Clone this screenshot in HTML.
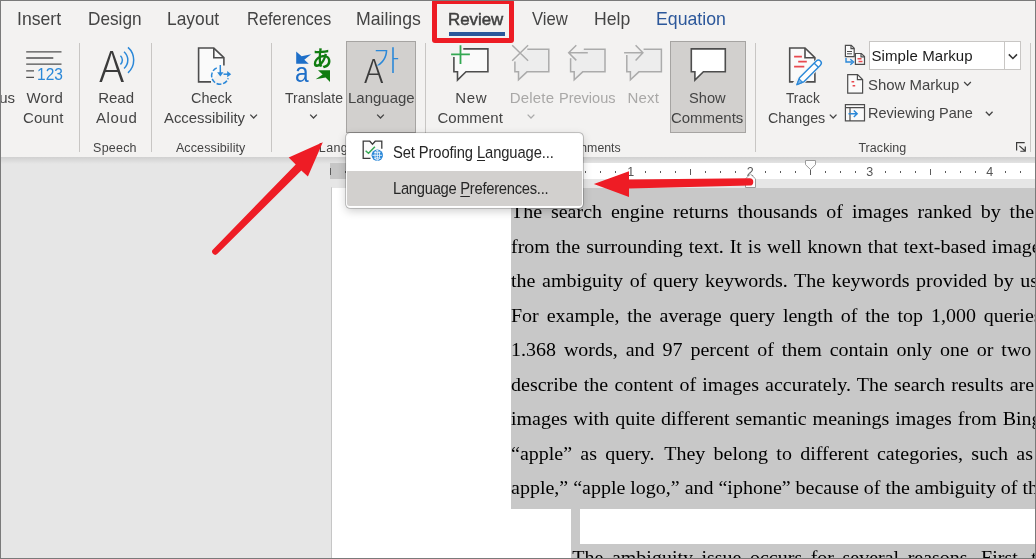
<!DOCTYPE html>
<html lang="en"><head><meta charset="utf-8"><title>Word - Review - Language Preferences</title>
<style>
html,body{margin:0;padding:0}
body{width:1036px;height:559px;position:relative;overflow:hidden;background:#f3f2f1;font-family:"Liberation Sans",sans-serif}
.t{position:absolute;white-space:nowrap;display:block}
.a{position:absolute}
.sep{position:absolute;width:1px;background:#c8c6c4;top:43px;height:109px}
.btn{position:absolute;background:#d2d0ce;border:1px solid #a6a4a2;box-sizing:border-box}
svg{position:absolute;overflow:visible}
u{text-underline-offset:2px;text-decoration-thickness:1px}
.ln{position:absolute;white-space:nowrap;font:400 20px/1 "Liberation Serif",serif;color:#000;transform:scaleY(.955);transform-origin:0 16.750px}
</style></head>
<body>
<div id="w" style="position:absolute;left:0;top:0;width:1036px;height:559px;overflow:hidden;will-change:transform">
<!-- ribbon background -->
<div class="a" style="left:0;top:0;width:1036px;height:157px;background:#f3f2f1"></div>
<!-- pressed buttons -->
<div class="btn" style="left:346px;top:41px;width:70px;height:92px"></div>
<div class="btn" style="left:670px;top:41px;width:76px;height:92px"></div>
<!-- group separators -->
<div class="sep" style="left:79px"></div>
<div class="sep" style="left:151px"></div>
<div class="sep" style="left:271px"></div>
<div class="sep" style="left:425px"></div>
<div class="sep" style="left:755px"></div>
<div class="sep" style="left:1030px"></div>
<!-- Review tab underline + red highlight box -->
<div class="a" style="left:449px;top:32px;width:56px;height:4px;background:#2b579a"></div>
<div class="a" style="left:431.700px;top:-1px;width:81.900px;height:43.500px;border:5px solid #ed1c24;border-radius:3px;box-sizing:border-box"></div>
<!-- markup combobox -->
<div class="a" style="left:869px;top:41px;width:152px;height:29px;background:#fff;border:1px solid #c8c6c4;box-sizing:border-box"></div>
<div class="a" style="left:1004px;top:42px;width:1px;height:27px;background:#c8c6c4"></div>

<!-- ribbon labels -->
<span class="t" id="l0" style="left:17.19px;top:10.93px;font:400 17.8px/1 'Liberation Sans', sans-serif;color:#444444;letter-spacing:0.000px;transform:scaleX(0.9904);transform-origin:0 0;">Insert</span>
<span class="t" id="l1" style="left:87.54px;top:10.93px;font:400 17.8px/1 'Liberation Sans', sans-serif;color:#444444;letter-spacing:0.000px;transform:scaleX(0.9682);transform-origin:0 0;">Design</span>
<span class="t" id="l2" style="left:166.51px;top:10.93px;font:400 17.8px/1 'Liberation Sans', sans-serif;color:#444444;letter-spacing:0.000px;transform:scaleX(0.9773);transform-origin:0 0;">Layout</span>
<span class="t" id="l3" style="left:246.65px;top:10.93px;font:400 17.8px/1 'Liberation Sans', sans-serif;color:#444444;letter-spacing:0.000px;transform:scaleX(0.9255);transform-origin:0 0;">References</span>
<span class="t" id="l4" style="left:356.49px;top:10.93px;font:400 17.8px/1 'Liberation Sans', sans-serif;color:#444444;letter-spacing:0.000px;transform:scaleX(0.9946);transform-origin:0 0;">Mailings</span>
<span class="t" id="l5" style="left:448.03px;top:11.44px;font:400 17.2px/1 'Liberation Sans', sans-serif;color:#404040;letter-spacing:0.000px;transform:scaleX(0.9800);transform-origin:0 0;-webkit-text-stroke:.5px #404040;">Review</span>
<span class="t" id="l6" style="left:531.75px;top:10.93px;font:400 17.8px/1 'Liberation Sans', sans-serif;color:#444444;letter-spacing:0.000px;transform:scaleX(0.9358);transform-origin:0 0;">View</span>
<span class="t" id="l7" style="left:593.91px;top:10.93px;font:400 17.8px/1 'Liberation Sans', sans-serif;color:#444444;letter-spacing:0.000px;transform:scaleX(0.9914);transform-origin:0 0;">Help</span>
<span class="t" id="l8" style="left:656.41px;top:10.93px;font:400 17.8px/1 'Liberation Sans', sans-serif;color:#2b579a;letter-spacing:0.000px;transform:scaleX(0.9956);transform-origin:0 0;">Equation</span>
<span class="t" id="l9" style="left:-0.70px;top:90.10px;font:400 15px/1 'Liberation Sans', sans-serif;color:#444444;letter-spacing:-0.244px;">us</span>
<span class="t" id="l10" style="left:26.42px;top:90.10px;font:400 15px/1 'Liberation Sans', sans-serif;color:#444444;letter-spacing:0.281px;">Word</span>
<span class="t" id="l11" style="left:23.00px;top:110.10px;font:400 15px/1 'Liberation Sans', sans-serif;color:#444444;letter-spacing:0.073px;">Count</span>
<span class="t" id="l12" style="left:98.14px;top:90.10px;font:400 15px/1 'Liberation Sans', sans-serif;color:#444444;letter-spacing:0.019px;">Read</span>
<span class="t" id="l13" style="left:96.01px;top:110.10px;font:400 15px/1 'Liberation Sans', sans-serif;color:#444444;letter-spacing:0.594px;">Aloud</span>
<span class="t" id="l14" style="left:191.03px;top:90.10px;font:400 15px/1 'Liberation Sans', sans-serif;color:#444444;letter-spacing:0.000px;transform:scaleX(0.9633);transform-origin:0 0;">Check</span>
<span class="t" id="l15" style="left:164.09px;top:110.10px;font:400 15px/1 'Liberation Sans', sans-serif;color:#444444;letter-spacing:0.000px;transform:scaleX(0.9919);transform-origin:0 0;">Accessibility</span>
<span class="t" id="l16" style="left:285.00px;top:90.10px;font:400 15px/1 'Liberation Sans', sans-serif;color:#444444;letter-spacing:0.000px;transform:scaleX(0.9365);transform-origin:0 0;">Translate</span>
<span class="t" id="l17" style="left:347.53px;top:90.10px;font:400 15px/1 'Liberation Sans', sans-serif;color:#444444;letter-spacing:0.000px;transform:scaleX(0.9981);transform-origin:0 0;">Language</span>
<span class="t" id="l18" style="left:455.34px;top:90.10px;font:400 15px/1 'Liberation Sans', sans-serif;color:#444444;letter-spacing:0.568px;">New</span>
<span class="t" id="l19" style="left:437.38px;top:110.10px;font:400 15px/1 'Liberation Sans', sans-serif;color:#444444;letter-spacing:0.083px;">Comment</span>
<span class="t" id="l20" style="left:509.75px;top:90.10px;font:400 15px/1 'Liberation Sans', sans-serif;color:#a9a8a7;letter-spacing:0.172px;">Delete</span>
<span class="t" id="l21" style="left:559.14px;top:90.10px;font:400 15px/1 'Liberation Sans', sans-serif;color:#a9a8a7;letter-spacing:0.000px;transform:scaleX(0.9685);transform-origin:0 0;">Previous</span>
<span class="t" id="l22" style="left:627.56px;top:90.10px;font:400 15px/1 'Liberation Sans', sans-serif;color:#a9a8a7;letter-spacing:0.170px;">Next</span>
<span class="t" id="l23" style="left:689.22px;top:90.10px;font:400 15px/1 'Liberation Sans', sans-serif;color:#444444;letter-spacing:0.000px;transform:scaleX(0.9756);transform-origin:0 0;">Show</span>
<span class="t" id="l24" style="left:671.20px;top:110.10px;font:400 15px/1 'Liberation Sans', sans-serif;color:#444444;letter-spacing:0.000px;transform:scaleX(0.9967);transform-origin:0 0;">Comments</span>
<span class="t" id="l25" style="left:786.20px;top:90.10px;font:400 15px/1 'Liberation Sans', sans-serif;color:#444444;letter-spacing:0.000px;transform:scaleX(0.9142);transform-origin:0 0;">Track</span>
<span class="t" id="l26" style="left:767.62px;top:110.10px;font:400 15px/1 'Liberation Sans', sans-serif;color:#444444;letter-spacing:0.000px;transform:scaleX(0.9536);transform-origin:0 0;">Changes</span>
<span class="t" id="l27" style="left:871.47px;top:47.90px;font:400 15px/1 'Liberation Sans', sans-serif;color:#1a1a1a;letter-spacing:0.092px;">Simple Markup</span>
<span class="t" id="l28" style="left:868.02px;top:77.40px;font:400 15px/1 'Liberation Sans', sans-serif;color:#444444;letter-spacing:0.000px;transform:scaleX(0.9962);transform-origin:0 0;">Show Markup</span>
<span class="t" id="l29" style="left:867.94px;top:104.60px;font:400 15px/1 'Liberation Sans', sans-serif;color:#444444;letter-spacing:0.000px;transform:scaleX(0.9682);transform-origin:0 0;">Reviewing Pane</span>
<span class="t" id="l30" style="left:93.08px;top:141.62px;font:400 12.5px/1 'Liberation Sans', sans-serif;color:#444444;letter-spacing:0.217px;">Speech</span>
<span class="t" id="l31" style="left:175.93px;top:141.62px;font:400 12.5px/1 'Liberation Sans', sans-serif;color:#444444;letter-spacing:0.114px;">Accessibility</span>
<span class="t" id="l32" style="left:318.84px;top:141.62px;font:400 12.5px/1 'Liberation Sans', sans-serif;color:#444444;letter-spacing:0.362px;">Language</span>
<span class="t" id="l33" style="left:560.84px;top:141.62px;font:400 12.5px/1 'Liberation Sans', sans-serif;color:#444444;letter-spacing:0.000px;transform:scaleX(0.9885);transform-origin:0 0;">Comments</span>
<span class="t" id="l34" style="left:858.39px;top:141.62px;font:400 12.5px/1 'Liberation Sans', sans-serif;color:#444444;letter-spacing:0.067px;">Tracking</span>
<span class="t" id="l35" style="left:36.98px;top:66.33px;font:400 16.5px/1 'Liberation Sans', sans-serif;color:#2b88d8;letter-spacing:0.000px;transform:scaleX(0.9407);transform-origin:0 0;">123</span>
<!-- ribbon icons (single overlay svg in page pixel coordinates) -->
<svg width="1036" height="160" viewBox="0 0 1036 160" style="left:0;top:0" fill="none" stroke-linecap="butt" stroke-linejoin="miter">
 <!-- Word Count -->
 <g stroke="#505050" stroke-width="1.3">
  <path d="M26.200 51.800H61.500M26.200 58H53.300M26.200 64.200H61.500M26.200 70.800H34M26.200 77.300H34"/>
 </g>
 <!-- Read Aloud: sound waves -->
 <g stroke="#2b88d8" stroke-width="1.5">
  <path d="M120.450 55.720A5.900 5.900 0 0 1 120.450 64.480"/>
  <path d="M124.060 51.700A11.300 11.300 0 0 1 124.060 68.500"/>
  <path d="M128 47.320A17.200 17.200 0 0 1 128 72.880"/>
 </g>
 <!-- Check Accessibility -->
 <path d="M211 81.900H198.600V48.050H213.800L223.900 57.700V65.500" stroke="#4d4d4d" stroke-width="1.600" fill="#fafafa"/>
 <path d="M213.800 48.050V57.700H223.900" stroke="#4d4d4d" stroke-width="1.600"/>
 <path d="M216.750 67.900A8.500 8.500 0 1 0 228.200 78.300" stroke="#2b88d8" stroke-width="1.500" stroke-dasharray="4.800 1.700"/>
 <path d="M220.300 65V73" stroke="#2b88d8" stroke-width="1.500"/>
 <path d="M217.100 72.200H223.500L220.300 76.400Z" fill="#2b88d8"/>
 <path d="M223.500 74.200H228" stroke="#2b88d8" stroke-width="1.500"/>
 <path d="M227.200 71.100V77.300L231.200 74.200Z" fill="#2b88d8"/>
 <!-- Translate arrows -->
 <path d="M296.200 51.400L301.600 56.300L311.200 54.200L304.300 59.700L308.750 63.700H296.200Z" fill="#1e6fc8"/>
 <path d="M318 70.200H330V82L325.600 77.600L315.700 79.300L322.600 74.600Z" fill="#107c10"/>
 <!-- New Comment -->
 <path d="M463.300 48.900H487.900V71.750H466L457.500 80.100V71.750H453.900V57" stroke="#4d4d4d" stroke-width="1.600" fill="#fafafa"/>
 <path d="M451.100 54.300H469.900M460.500 45.200V64" stroke="#33a852" stroke-width="1.800"/>
 <!-- Delete / Previous / Next (disabled) -->
 <g stroke="#ababab" stroke-width="1.500">
  <path d="M527.300 49.200H548.800V71.850H527L518.500 79.800V71.850H514.900V61.500" fill="#ededed"/>
  <path d="M512.200 45.300L528.100 60.700M528.100 45.300L512.200 60.700"/>
  <path d="M583.800 49.200H605V71.850H582.700L574.200 79.800V71.850H570.600V58.300" fill="#ededed"/>
  <path d="M587.800 52.700H568.400M576.300 45.300L568.700 52.700L576.300 60.400"/>
  <path d="M643.600 49.200H661.400V71.850H638.900L630.400 79.800V71.850H626.800V55.100" fill="#ededed"/>
  <path d="M624.100 52.700H643M635.600 45.300L642.900 52.700L635.600 60.400"/>
 </g>
 <!-- Show Comments -->
 <path d="M691.300 48.900H725.300V71.750H703.400L694.900 80.100V71.750H691.300Z" stroke="#4d4d4d" stroke-width="1.600" fill="#ffffff"/>
 <!-- Track Changes -->
 <path d="M789.700 48.050H805L814.900 57.700V81.900H789.700Z" stroke="#4d4d4d" stroke-width="1.600" fill="#fafafa"/>
 <path d="M805 48.050V57.700H814.900" stroke="#4d4d4d" stroke-width="1.600"/>
 <path d="M794.100 56.700H801.900M798.200 61.700H806.800M794.100 66.700H804.300" stroke="#e8494f" stroke-width="1.800"/>
 <g transform="translate(797 84.500) rotate(-45)">
  <path d="M-1.500 -4.500H31V4.500H-1.500Z" fill="#f3f2f1" stroke="none"/>
  <path d="M0 0L6.500 -2.900H30.200A2.900 2.900 0 0 1 30.200 2.900H6.500Z" fill="#fdfdfd" stroke="#2b88d8" stroke-width="1.400" stroke-linejoin="round"/>
  <path d="M0 0L5.500 -2.400V2.400Z" fill="#7db8ea" stroke="#2b88d8" stroke-width="1"/>
  <path d="M27.300 -2.900V2.900" stroke="#2b88d8" stroke-width="1.400"/>
 </g>
 <!-- small tracking icons -->
 <g stroke="#4d4d4d" stroke-width="1.200">
  <path d="M845.400 45.400H851.300L854.200 48.300V56.600H845.400Z" fill="#fafafa"/>
  <path d="M851 45.400V48.600H854.200" />
  <path d="M847 51.500H852M847 53.800H852" stroke-width="1"/>
  <path d="M855.400 53.500H861.300L864.500 56.600V64.300H855.400Z" fill="#fafafa"/>
  <path d="M861 53.500V56.800H864.500"/>
  <path d="M847.700 74.600H857.600L862.600 79.500V93.100H847.700Z" fill="#fafafa"/>
  <path d="M857.400 74.600V79.700H862.600"/>
  <path d="M845.400 104.600H864.500V120.800H845.400ZM845.400 107.700H864.500M850 107.700V120.800" fill="#fafafa"/>
 </g>
 <path d="M857.500 58.800H861.500M858.500 61.500H862.500" stroke="#e8494f" stroke-width="1.400"/>
 <path d="M851.500 81.800H854.200M852.600 85.700H855.200" stroke="#e8494f" stroke-width="1.600"/>
 <path d="M846 58V62H852" stroke="#2b88d8" stroke-width="1.400"/>
 <path d="M850.300 59.200L853.600 62L850.300 64.800" stroke="#2b88d8" stroke-width="1.400"/>
 <path d="M848.500 113.800H856.800M853.800 110.600L857.200 113.800L853.800 117" stroke="#2b88d8" stroke-width="1.400"/>
 <!-- dropdown chevrons -->
 <g stroke="#444444" stroke-width="1.300">
  <path d="M250.300 114.600L253.650 118L257 114.600"/>
  <path d="M310.150 114.600L313.500 118L316.850 114.600"/>
  <path d="M377.150 114.600L380.500 118L383.850 114.600"/>
  <path d="M829.800 114.600L833.150 118L836.500 114.600"/>
  <path d="M964.150 82L967.500 85.400L970.850 82"/>
  <path d="M985.850 111.800L989.200 115.200L992.550 111.800"/>
  <path d="M1008.800 54.400L1012.900 58.500L1017 54.400" stroke="#333" stroke-width="1.500"/>
 </g>
 <path d="M527.650 114.600L531 118L534.350 114.600" stroke="#ababab" stroke-width="1.300"/>
 <!-- dialog launcher -->
 <g stroke="#3b3b3b" stroke-width="1.200">
  <path d="M1016.600 150.600V142.600H1024.700"/>
  <path d="M1019.400 145.900L1025.100 151M1025.300 146.600V151.250H1020.300"/>
 </g>
</svg>
<!-- icon glyphs that are real characters -->
<span class="t" id="icoA1" style="left:98.900px;top:42.400px;font:300 43px/1 'Noto Sans CJK KR','Liberation Sans',sans-serif;color:#3b3b3b">A</span>
<span class="t" id="icoA2" style="left:363.900px;top:52.700px;font:300 33px/1 'Noto Sans CJK KR','Liberation Sans',sans-serif;color:#3b3b3b">A</span>
<span class="t" id="icoKa" style="left:372.800px;top:45.300px;font:300 28.700px/1 'Noto Sans CJK KR',sans-serif;color:#2b88d8;clip-path:polygon(0 0,100% 0,100% 100%,13.200px 100%,13.200px 20.200px,0 20.200px)">가</span>
<span class="t" id="icoa" style="left:295.200px;top:57.600px;font:400 28.500px/1 'Liberation Sans',sans-serif;color:#1e6fc8;transform:scaleX(.86);transform-origin:0 0">a</span>
<span class="t" id="icoJa" style="left:311.800px;top:45.900px;font:700 21.500px/1 'Noto Sans CJK JP',sans-serif;color:#107c10;transform:scaleX(.93);transform-origin:0 0">あ</span>

<!-- document area -->
<div class="a" style="left:0;top:157px;width:1036px;height:402px;background:#e6e6e6"></div>
<div class="a" style="left:0;top:157px;width:1036px;height:7px;background:linear-gradient(#d0d0d0,#dbdbdb 50%,#e6e6e6)"></div>
<!-- page -->
<div class="a" style="left:331px;top:187px;width:705px;height:372px;background:#fff;border-left:1px solid #c6c6c6;border-top:1px solid #d4d4d4;box-sizing:border-box"></div>
<!-- ruler -->
<div class="a" style="left:330px;top:163px;width:181px;height:16px;background:#c6c6c6"></div>
<div class="a" style="left:511px;top:163px;width:525px;height:16px;background:#fff"></div>
<div class="a" style="left:332px;top:179px;width:704px;height:9px;background:#e6e6e6"></div>
<svg width="1036" height="30" style="left:0;top:158px" viewBox="0 158 1036 30">
 <g fill="#5a5a5a">
  <rect x="330" y="168" width="1" height="7"/><rect x="345" y="171" width="1" height="2"/>
  <rect x="585" y="171" width="1" height="2"/><rect x="600" y="171" width="1" height="2"/><rect x="615" y="171" width="1" height="2"/>
  <rect x="645" y="171" width="1" height="2"/><rect x="660" y="171" width="1" height="2"/><rect x="675" y="171" width="1" height="2"/>
  <rect x="690" y="169" width="1" height="6"/>
  <rect x="705" y="171" width="1" height="2"/><rect x="720" y="171" width="1" height="2"/><rect x="735" y="171" width="1" height="2"/>
  <rect x="765" y="171" width="1" height="2"/><rect x="780" y="171" width="1" height="2"/><rect x="795" y="171" width="1" height="2"/>
  <rect x="810" y="169" width="1" height="6"/>
  <rect x="825" y="171" width="1" height="2"/><rect x="840" y="171" width="1" height="2"/><rect x="855" y="171" width="1" height="2"/>
  <rect x="885" y="171" width="1" height="2"/><rect x="900" y="171" width="1" height="2"/><rect x="915" y="171" width="1" height="2"/>
  <rect x="930" y="169" width="1" height="6"/>
  <rect x="945" y="171" width="1" height="2"/><rect x="960" y="171" width="1" height="2"/><rect x="975" y="171" width="1" height="2"/>
  <rect x="1005" y="171" width="1" height="2"/><rect x="1020" y="171" width="1" height="2"/>
 </g>
 <g font-family="'Liberation Sans',sans-serif" font-size="12.5" fill="#555" text-anchor="middle">
  <text x="630.7" y="176">1</text><text x="750.3" y="176">2</text><text x="869.8" y="176">3</text><text x="989.8" y="176">4</text>
 </g>
 <!-- indent markers -->
 <path d="M805.5 160.5h10v4.2l-5 4.8l-5-4.800z" fill="#fdfdfd" stroke="#9a9a9a" stroke-width="1"/>
 <path d="M745.5 187.5v-8.700l5-4.800l5 4.800v8.700z" fill="#fdfdfd" stroke="#9a9a9a" stroke-width="1"/>
</svg>
<!-- selected text block -->
<div class="a" style="left:511px;top:188px;width:525px;height:320.800px;background:#c8c8c8"></div>
<div class="a" style="left:571.200px;top:508px;width:8.800px;height:51px;background:#c8c8c8"></div>
<div class="a" style="left:571.5px;top:544px;width:464.500px;height:15px;background:#c8c8c8"></div>
<div class="ln" style="left:511px;top:201.050px;word-spacing:3.870px">The search engine returns thousands of images ranked by the most</div>
<div class="ln" style="left:511px;top:235.550px;word-spacing:0.930px">from the surrounding text. It is well known that text-based image search</div>
<div class="ln" style="left:511px;top:270.050px;word-spacing:1.570px">the ambiguity of query keywords. The keywords provided by users</div>
<div class="ln" style="left:511px;top:304.550px;word-spacing:2.850px">For example, the average query length of the top 1,000 queries</div>
<div class="ln" style="left:511px;top:339.050px;word-spacing:2.920px">1.368 words, and 97 percent of them contain only one or two</div>
<div class="ln" style="left:511px;top:373.550px;word-spacing:1.170px">describe the content of images accurately. The search results are</div>
<div class="ln" style="left:511px;top:408.050px;word-spacing:0.970px">images with quite different semantic meanings images from Bing</div>
<div class="ln" style="left:511px;top:442.550px;word-spacing:3.300px">“apple” as query.<span style="margin-left:1.700px"> </span>They belong to different categories, such as</div>
<div class="ln" style="left:511px;top:477.050px;word-spacing:-0.060px">apple,” “apple logo,” and “iphone” because of the ambiguity of the</div>
<div class="ln" style="left:572.300px;top:546.500px;word-spacing:3.500px">The ambiguity issue occurs for several reasons. First, the</div>

<!-- Language dropdown menu -->
<div class="a" style="left:346.300px;top:133.300px;width:237.100px;height:74.600px;background:#fff;border:1.200px solid #fbfbfb;border-radius:4px;box-sizing:border-box;box-shadow:0 0 0 .8px rgba(0,0,0,.24),0 3px 10px rgba(0,0,0,.2);overflow:hidden">
 <div class="a" style="left:0;top:36.500px;width:234.700px;height:35.700px;background:#d2d0ce;border-radius:0 0 2.500px 2.500px"></div>
</div>
<svg width="30" height="30" viewBox="358 136 30 30" style="left:358.700px;top:136px" fill="none">
 <path d="M380.800 148.700V141.200H374.200L371.500 144.200L368.800 141.200H362.200V158.300H369.500" stroke="#3b3b3b" stroke-width="1.300" fill="#fafafa"/>
 <path d="M364.600 150.800L367.500 153.300L373.900 146.700" stroke="#33a852" stroke-width="1.500"/>
 <circle cx="376.300" cy="155.300" r="5.700" fill="#2b88d8"/>
 <path d="M371.400 155.300H381.200M376.300 150.400V160.200M373 152.200Q376.300 153.600 379.600 152.200M373 158.400Q376.300 157 379.600 158.400" stroke="#fff" stroke-width=".8"/>
 <ellipse cx="376.300" cy="155.300" rx="2.300" ry="4.900" stroke="#fff" stroke-width=".8"/>
</svg>

<span class="t" id="l36" style="left:392.59px;top:145.08px;font:400 16.8px/1 'Liberation Sans', sans-serif;color:#262626;letter-spacing:-0.126px;transform:scaleX(0.8800);transform-origin:0 0;">Set Proofing <u>L</u>anguage...</span>
<span class="t" id="l37" style="left:392.61px;top:180.58px;font:400 16.8px/1 'Liberation Sans', sans-serif;color:#262626;letter-spacing:-0.318px;transform:scaleX(0.8800);transform-origin:0 0;">Language <u>P</u>references...</span>
<!-- red annotation arrows -->
<svg width="1036" height="559" viewBox="0 0 1036 559" style="left:0;top:0">
 <g fill="#ee1c25">
  <path d="M213 249.400A3.100 3.100 0 0 0 217.400 253.800L301.300 170.400L307.900 176.500L322.800 142.200L288.700 157.600L295.700 164.400Z"/>
  <path d="M749.600 178.200A3.700 3.700 0 0 1 749.600 185.600L629 188.400V196.900L593.900 183.900L629 171.300V179.600Z"/>
 </g>
</svg>

<!-- frame -->
<div class="a" style="left:0;top:0;width:1036px;height:559px;border:1px solid #7a7a7a;box-sizing:border-box;pointer-events:none"></div>
</div><!-- /w -->

</body></html>
